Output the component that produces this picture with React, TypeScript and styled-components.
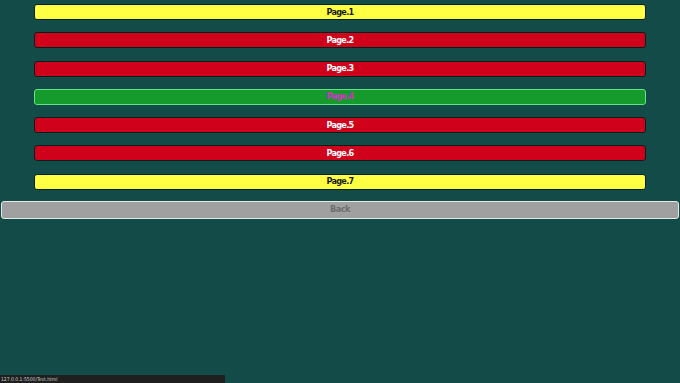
import React from "react";
import styled, { createGlobalStyle } from "styled-components";

const GlobalStyle = createGlobalStyle`
  html, body {
    margin: 0;
    padding: 0;
    background: #124b47;
    height: 100%;
  }
  #root {
    min-height: 100vh;
  }
`;

type Tone = "yellow" | "red" | "green";

const tones: Record<Tone, { bg: string; border: string; color: string }> = {
  yellow: { bg: "#ffff44", border: "#0a1f1d", color: "#1a1a1a" },
  red: { bg: "#d0021b", border: "#0a1f1d", color: "#ffffff" },
  green: { bg: "#149b2b", border: "#63e384", color: "#d22fc8" },
};

const Page = styled.div`
  min-height: 100vh;
  background: #124b47;
  padding-top: 4px;
  box-sizing: border-box;
  position: relative;
  font-family: "DejaVu Sans Condensed", "DejaVu Sans", sans-serif;
`;

const List = styled.div`
  display: flex;
  flex-direction: column;
  align-items: center;
  gap: 12.3px;
`;

const PageButton = styled.button<{ tone: Tone }>`
  width: 90%;
  height: 16px;
  padding: 0;
  border-radius: 3px;
  border: 1px solid ${({ tone }) => tones[tone].border};
  background: ${({ tone }) => tones[tone].bg};
  color: ${({ tone }) => tones[tone].color};
  font-family: inherit;
  font-weight: bold;
  font-size: 9px;
  letter-spacing: -0.7px;
  line-height: 1;
  cursor: pointer;
`;

const BackButton = styled.button`
  display: block;
  width: calc(100% - 2px);
  margin: 11px 1px 0;
  height: 18px;
  padding: 0;
  border-radius: 3px;
  border: 1px solid #e8e8e8;
  background: #a0a0a0;
  color: #6e6e6e;
  font-family: inherit;
  font-weight: bold;
  font-size: 9px;
  letter-spacing: -0.5px;
  line-height: 1;
  cursor: pointer;
`;

const Status = styled.div`
  position: absolute;
  left: 0;
  bottom: 0;
  width: 225px;
  height: 8px;
  background: #1f1f1f;
  color: #cfcfcf;
  font-family: "DejaVu Sans Condensed", sans-serif;
  font-size: 5px;
  line-height: 8px;
  padding-left: 1px;
  box-sizing: border-box;
`;

const pages: { label: string; tone: Tone }[] = [
  { label: "Page.1", tone: "yellow" },
  { label: "Page.2", tone: "red" },
  { label: "Page.3", tone: "red" },
  { label: "Page.4", tone: "green" },
  { label: "Page.5", tone: "red" },
  { label: "Page.6", tone: "red" },
  { label: "Page.7", tone: "yellow" },
];

export default function App() {
  return (
    <Page>
      <GlobalStyle />
      <List>
        {pages.map((p) => (
          <PageButton key={p.label} tone={p.tone} type="button">
            {p.label}
          </PageButton>
        ))}
      </List>
      <BackButton type="button">Back</BackButton>
      <Status>127.0.0.1:5500/Test.html</Status>
    </Page>
  );
}
